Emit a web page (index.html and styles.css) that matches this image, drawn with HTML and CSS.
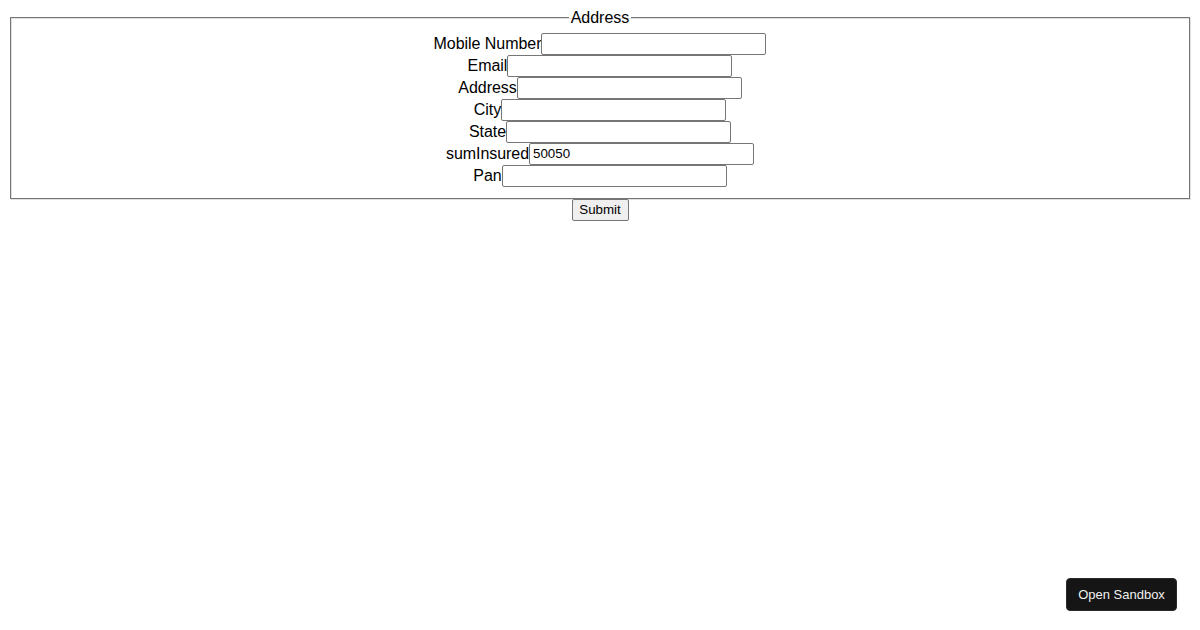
FILE: index.html
```html
<!DOCTYPE html>
<html>
<head>
<meta charset="utf-8">
<link rel="stylesheet" href="styles.css">
</head>
<body>
<form class="form">
  <fieldset class="box">
    <legend class="box-title">Address</legend>
    <div class="row"><label class="lbl">Mobile Number</label><input class="field" type="text"></div>
    <div class="row"><label class="lbl">Email</label><input class="field" type="text"></div>
    <div class="row"><label class="lbl">Address</label><input class="field" type="text"></div>
    <div class="row"><label class="lbl">City</label><input class="field" type="text"></div>
    <div class="row"><label class="lbl">State</label><input class="field" type="text"></div>
    <div class="row"><label class="lbl">sumInsured</label><input class="field" type="text" value="50050"></div>
    <div class="row"><label class="lbl">Pan</label><input class="field" type="text"></div>
  </fieldset>
  <div class="actions"><button class="submit" type="button">Submit</button></div>
</form>
<button class="sandbox" type="button">Open Sandbox</button>
</body>
</html>
```
FILE: styles.css
```css
html, body {
  background: #fff;
}
body {
  margin: 8px;
  font-family: "Liberation Sans", Arial, sans-serif;
  font-size: 16px;
  color: #000;
}
.box {
  margin: 0 2px;
  padding: 5.6px 12px 11px;
  border: 1px solid #767676;
  box-shadow: inset 1px 1px 0 #e0e0e0, 1px 1px 0 #e0e0e0;
}
.box-title {
  margin: 0 auto;
  padding: 1px 2px 0;
  font-size: 16px;
  line-height: 18px;
}
.row {
  display: flex;
  justify-content: center;
  align-items: center;
  height: 22px;
}
.lbl {
  font-size: 16px;
  line-height: 18px;
  letter-spacing: -0.05px;
}
.field {
  box-sizing: border-box;
  width: 225px;
  height: 22px;
  margin: 0;
  padding: 1px 3px;
  border: 1px solid #767676;
  border-radius: 2px;
  font-family: "Liberation Sans", Arial, sans-serif;
  font-size: 13.33px;
  color: #000;
  background: #fff;
}
.actions {
  text-align: center;
  font-size: 0;
}
.submit {
  box-sizing: border-box;
  width: 57px;
  height: 22px;
  padding: 1px 6px;
  border: 1px solid #767676;
  border-radius: 2px;
  background: #efefef;
  font-family: "Liberation Sans", Arial, sans-serif;
  font-size: 13.33px;
  color: #000;
}
.sandbox {
  position: fixed;
  right: 23px;
  bottom: 19px;
  width: 111px;
  height: 33px;
  padding: 0;
  border: 1px solid #2a2a2a;
  border-radius: 4px;
  background: #151515;
  color: #f0f0f0;
  font-family: "Liberation Sans", Arial, sans-serif;
  font-size: 13px;
}
```
